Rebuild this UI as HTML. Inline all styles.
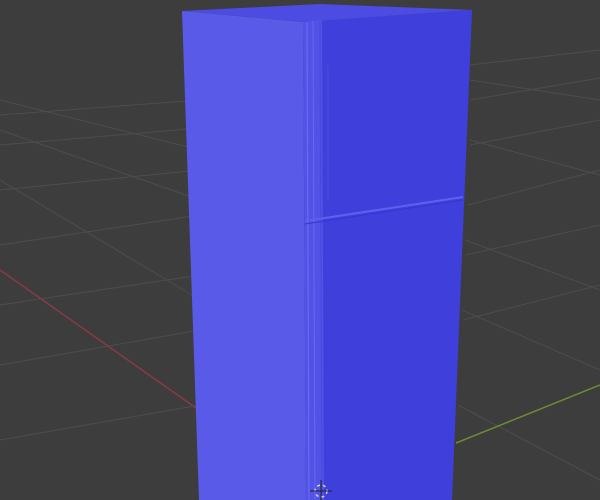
<!DOCTYPE html>
<html><head><meta charset="utf-8"><style>html,body{margin:0;padding:0;background:#3d3d3d;width:600px;height:500px;overflow:hidden}</style></head>
<body>
<svg width="600" height="500" viewBox="0 0 600 500" xmlns="http://www.w3.org/2000/svg">
<rect width="600" height="500" fill="#3d3d3d"/>
<g stroke="#4d4d4d" stroke-width="1" fill="none">
<line x1="0" y1="115" x2="200" y2="100"/>
<line x1="0" y1="145" x2="200" y2="128"/>
<line x1="0" y1="190" x2="200" y2="170"/>
<line x1="0" y1="245" x2="200" y2="215"/>
<line x1="0" y1="305" x2="200" y2="275"/>
<line x1="0" y1="365" x2="200" y2="330"/>
<line x1="0" y1="440" x2="200" y2="405"/>
<line x1="0" y1="130" x2="200" y2="200"/>
<line x1="0" y1="180" x2="200" y2="300"/>
<line x1="0" y1="100" x2="200" y2="150"/>
<line x1="470" y1="65" x2="600" y2="50"/>
<line x1="470" y1="100" x2="600" y2="78"/>
<line x1="470" y1="145" x2="600" y2="120"/>
<line x1="468" y1="205" x2="600" y2="170"/>
<line x1="465" y1="255" x2="600" y2="225"/>
<line x1="463" y1="320" x2="600" y2="285"/>
<line x1="470" y1="80" x2="600" y2="100"/>
<line x1="470" y1="140" x2="600" y2="175"/>
<line x1="465" y1="240" x2="600" y2="290"/>
<line x1="462" y1="310" x2="600" y2="370"/>
<line x1="458" y1="405" x2="600" y2="480"/>
</g>
<line x1="0" y1="270" x2="196" y2="408" stroke="#8a3a45" stroke-width="1.5"/>
<line x1="456" y1="443" x2="600" y2="385" stroke="#6e8a34" stroke-width="1.5"/>
<!-- top face -->
<polygon points="182,11 320,4 472,10 305,22" fill="#4c4ce2"/>
<!-- left face -->
<polygon points="182,11 303,22 306,500 199,500" fill="#5a5ae9"/>
<!-- right face -->
<polygon points="303,22 472,10 452,500 306,500" fill="#3f3fdc"/>
<!-- door strip -->
<polygon points="303,22 322,20 324,500 306,500" fill="#5252e6"/>
<line x1="307" y1="22" x2="309" y2="500" stroke="#6a6af0" stroke-width="1.2"/>
<line x1="313" y1="21" x2="315" y2="500" stroke="#6868ef" stroke-width="1"/>
<line x1="320" y1="21" x2="322" y2="500" stroke="#4848df" stroke-width="1"/>
<!-- handle hint -->
<line x1="328" y1="65" x2="328" y2="200" stroke="#4848e0" stroke-width="1.5"/>
<!-- door split -->
<line x1="305" y1="221" x2="463" y2="197" stroke="#6060ec" stroke-width="2"/>
<line x1="305" y1="224" x2="463" y2="200" stroke="#3535d0" stroke-width="1"/>
<!-- feet -->
<rect x="202" y="482" width="12" height="8" fill="#5a5ae9"/>
<!-- 3D cursor -->
<circle cx="321" cy="491" r="6" fill="none" stroke="#e0d0e0" stroke-width="1.5" stroke-dasharray="3,3"/>
<line x1="321" y1="480" x2="321" y2="500" stroke="#222" stroke-width="1"/>
<line x1="310" y1="491" x2="332" y2="491" stroke="#222" stroke-width="1"/>
</svg>
</body></html>
